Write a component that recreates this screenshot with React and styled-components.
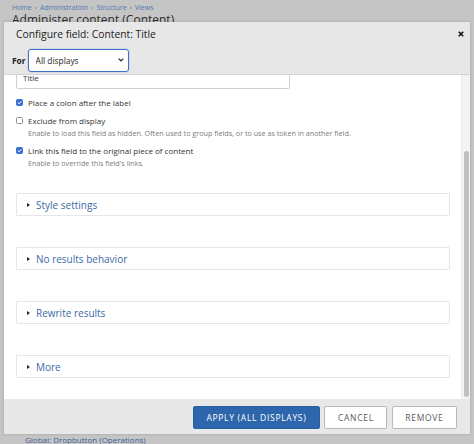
import React, { useLayoutEffect, useRef, useState } from "react"
import styled, { createGlobalStyle } from "styled-components"

const GlobalStyle = createGlobalStyle`
  html, body {
    margin: 0;
    padding: 0;
  }
  body {
    width: 474px;
    height: 444px;
    overflow: hidden;
    background: #c5c5c5;
    font-family: "Open Sans", "Liberation Sans", sans-serif;
    color: #333;
  }
  * {
    box-sizing: border-box;
  }
`

const Page = styled.div`
  position: relative;
  height: 444px;
  display: flex;
  flex-direction: column;
  padding: 3px 12px 0;
`

const Breadcrumb = styled.nav`
  display: flex;
  gap: 3px;
  font-size: 7px;
  line-height: 10px;
  color: #5178ad;
`

const Sep = styled.span`
  color: #6b6b6b;
`

const PageTitle = styled.h1`
  margin: 0;
  font-size: 12px;
  line-height: 14px;
  font-weight: 400;
  color: #2b2b2b;
`

const UnderLink = styled.a`
  margin-top: auto;
  margin-bottom: -1px;
  margin-left: 13px;
  font-size: 8px;
  line-height: 11px;
  color: #3d6096;
`

const Dialog = styled.div`
  position: absolute;
  top: 22px;
  left: 4px;
  width: 466px;
  height: 412px;
  display: flex;
  flex-direction: column;
  background: #fff;
  border-radius: 2px;
  box-shadow: 0 0 3px rgba(0, 0, 0, 0.18);
  overflow: hidden;
`

const Header = styled.div`
  height: 53px;
  flex: none;
  padding: 5px 0 0 8px;
  background: #e8e7e8;
  border-bottom: 1px solid #d6d5d6;
`

const TitleRow = styled.div`
  display: flex;
  align-items: center;
  justify-content: space-between;
  height: 14px;
  padding-right: 6px;
`

const DialogTitle = styled.h2`
  margin: 0 0 0 4px;
  font-size: 10.3px;
  line-height: 14px;
  font-weight: 400;
  color: #222;
`

const CloseButton = styled.button`
  display: flex;
  padding: 0;
  border: 0;
  background: none;
  cursor: pointer;
`

const ForRow = styled.div`
  display: flex;
  align-items: center;
  gap: 2px;
  margin-top: 7.5px;
`

const ForLabel = styled.label`
  font-size: 8.4px;
  font-weight: 700;
  color: #222;
`

const SelectWrap = styled.span`
  position: relative;
  display: inline-flex;
`

const Select = styled.select`
  appearance: none;
  width: 101px;
  height: 23px;
  padding: 0 0 0 7px;
  border: 1.5px solid #3f70cc;
  border-radius: 3px;
  background: #fff;
  font-family: inherit;
  font-size: 8.4px;
  color: #222;
  box-shadow: 0 0 0 1px rgba(63, 112, 204, 0.12);
`

const Chevron = styled.svg`
  position: absolute;
  right: 5px;
  top: 9px;
  pointer-events: none;
`

const Body = styled.div`
  flex: 1;
  min-height: 0;
  display: flex;
`

const Viewport = styled.div`
  flex: 1;
  min-width: 0;
  overflow: hidden;
`

const Track = styled.div`
  position: relative;
  width: 9px;
  flex: none;
  background: #f3f3f3;
  border-left: 1px solid #ececec;
`

const Thumb = styled.div`
  position: absolute;
  left: 2px;
  width: 5px;
  border-radius: 3px;
  background: #c0c0c0;
`

const Content = styled.div`
  padding: 12px 11px 21px 12px;
`

const Intro = styled.p`
  margin: 0 0 10px;
  font-size: 7.2px;
  line-height: 10px;
  color: #7a7a7a;
`

const FieldLabel = styled.label`
  display: block;
  margin-bottom: 4px;
  font-size: 8px;
  line-height: 12px;
  font-weight: 700;
  color: #333;
`

const TextInput = styled.input`
  display: block;
  width: 274px;
  height: 24px;
  margin: 0 0 7px;
  padding: 0 6px;
  border: 1px solid #d0d0d0;
  border-radius: 2px;
  font-family: inherit;
  font-size: 8px;
  color: #333;
`

const Item = styled.div`
  margin-bottom: 6px;
`

const CheckRow = styled.label`
  display: flex;
  align-items: center;
  gap: 5px;
  height: 12px;
  font-size: 8px;
  color: #333;
`

const Box = styled.span`
  width: 7px;
  height: 7px;
  flex: none;
  display: flex;
  align-items: center;
  justify-content: center;
  border-radius: 1.5px;
  border: 1px solid ${(p) => (p.$checked ? "#3a6fcf" : "#8e8e8e")};
  background: ${(p) => (p.$checked ? "#3a6fcf" : "#fff")};
`

const Desc = styled.div`
  margin: 2px 0 0 12px;
  font-size: 7.2px;
  line-height: 10px;
  color: #7c7c7c;
`

const DetailsList = styled.div`
  display: flex;
  flex-direction: column;
  gap: 31px;
  margin-top: 25px;
`

const Details = styled.div`
  display: flex;
  align-items: center;
  gap: 6px;
  height: 23px;
  padding-left: 10px;
  border: 1px solid #e6e6e6;
  border-radius: 1px;
  background: #fff;
`

const Marker = styled.span`
  width: 0;
  height: 0;
  border-left: 3px solid #222;
  border-top: 2.5px solid transparent;
  border-bottom: 2.5px solid transparent;
`

const Summary = styled.span`
  font-size: 10px;
  color: #3b6aa6;
`

const Footer = styled.div`
  height: 35px;
  flex: none;
  display: flex;
  justify-content: flex-end;
  gap: 4.5px;
  padding: 6.5px 13px 0 0;
  background: #e8e8e8;
`

const Button = styled.button`
  height: 23px;
  padding: 0 12.5px;
  border-radius: 2px;
  border: 1px solid ${(p) => (p.$primary ? "#2a5f9f" : "#b9b9b9")};
  background: ${(p) => (p.$primary ? "#2e66ad" : "#fff")};
  color: ${(p) => (p.$primary ? "#fff" : "#5a5a5a")};
  font-family: inherit;
  font-size: 8.5px;
  letter-spacing: 0.7px;
  text-transform: uppercase;
  cursor: pointer;
`

function Checkbox({ checked, label, desc }) {
  return (
    <Item>
      <CheckRow>
        <Box $checked={checked}>
          {checked && (
            <svg width="5" height="5" viewBox="0 0 10 10">
              <path d="M1.5 5.2 L4 7.6 L8.6 2.4" fill="none" stroke="#fff" strokeWidth="2" />
            </svg>
          )}
        </Box>
        {label}
      </CheckRow>
      {desc && <Desc>{desc}</Desc>}
    </Item>
  )
}

const sections = ["Style settings", "No results behavior", "Rewrite results", "More"]

export default function App() {
  const viewRef = useRef(null)
  const [thumb, setThumb] = useState({ top: 0, height: 0 })

  useLayoutEffect(() => {
    const el = viewRef.current
    if (!el) return
    el.scrollTop = el.scrollHeight
    const track = el.clientHeight - 4
    const ratio = el.clientHeight / el.scrollHeight
    setThumb({
      top: 2 + (el.scrollTop / el.scrollHeight) * track,
      height: ratio * track,
    })
  }, [])

  return (
    <>
      <GlobalStyle />
      <Page>
        <Breadcrumb>
          <span>Home</span>
          <Sep>›</Sep>
          <span>Administration</span>
          <Sep>›</Sep>
          <span>Structure</span>
          <Sep>›</Sep>
          <span>Views</span>
        </Breadcrumb>
        <PageTitle>Administer content (Content)</PageTitle>
        <UnderLink>Global: Dropbutton (Operations)</UnderLink>

        <Dialog>
          <Header>
            <TitleRow>
              <DialogTitle>Configure field: Content: Title</DialogTitle>
              <CloseButton aria-label="Close">
                <svg width="6" height="6" viewBox="0 0 6 6">
                  <path d="M0.8 0.8 L5.2 5.2 M5.2 0.8 L0.8 5.2" stroke="#111" strokeWidth="1.6" />
                </svg>
              </CloseButton>
            </TitleRow>
            <ForRow>
              <ForLabel>For</ForLabel>
              <SelectWrap>
                <Select defaultValue="all">
                  <option value="all">All displays</option>
                  <option value="page">This page (override)</option>
                </Select>
                <Chevron width="6" height="4" viewBox="0 0 6 4">
                  <path d="M0.7 0.7 L3 3 L5.3 0.7" fill="none" stroke="#222" strokeWidth="1.2" />
                </Chevron>
              </SelectWrap>
            </ForRow>
          </Header>

          <Body>
            <Viewport ref={viewRef}>
              <Content>
                <Intro>
                  Appears in: page, block.
                  <br />
                  The settings below apply to every display of this view.
                </Intro>
                <Checkbox checked label="Create a label" desc="Enable to create a label for this field." />
                <FieldLabel>Label</FieldLabel>
                <TextInput defaultValue="Title" />
                <Checkbox checked label="Place a colon after the label" />
                <Checkbox
                  label="Exclude from display"
                  desc="Enable to load this field as hidden. Often used to group fields, or to use as token in another field."
                />
                <Checkbox
                  checked
                  label="Link this field to the original piece of content"
                  desc="Enable to override this field's links."
                />
                <DetailsList>
                  {sections.map((s) => (
                    <Details key={s}>
                      <Marker />
                      <Summary>{s}</Summary>
                    </Details>
                  ))}
                </DetailsList>
              </Content>
            </Viewport>
            <Track>
              <Thumb style={{ top: thumb.top, height: thumb.height }} />
            </Track>
          </Body>

          <Footer>
            <Button $primary>Apply (all displays)</Button>
            <Button>Cancel</Button>
            <Button>Remove</Button>
          </Footer>
        </Dialog>
      </Page>
    </>
  )
}
